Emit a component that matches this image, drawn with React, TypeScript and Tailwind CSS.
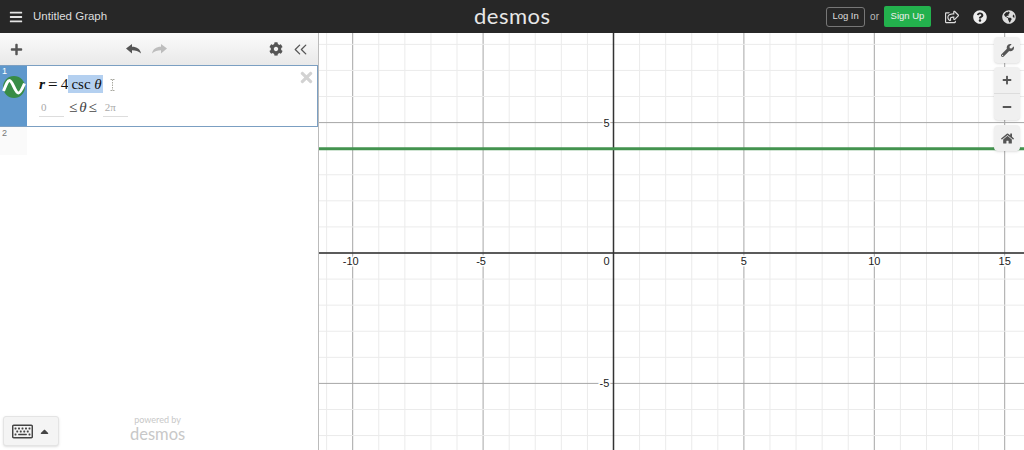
import { FaBars, FaCog, FaGlobeAmericas, FaHome, FaPlus, FaMinus, FaQuestionCircle, FaRegShareSquare, FaTimes, FaWrench, FaCaretUp, FaRegKeyboard } from "react-icons/fa";
import { ChevronsLeft } from "lucide-react";

const UNIT = 26.08;
const W = 705;
const H = 417;
// origin inside the graph svg (page coords minus panel and header)
const OX = 294.5;
const OY = 220;

function range(from: number, to: number) {
  const out: number[] = [];
  for (let i = from; i <= to; i++) out.push(i);
  return out;
}

function Graph() {
  const xs = range(-12, 16);
  const ys = range(-8, 9);
  return (
    <svg width={W} height={H} className="block" style={{ fontFamily: "'Liberation Sans', Arial, sans-serif" }}>
      {xs.map((i) => (
        <line key={i} x1={OX + i * UNIT} x2={OX + i * UNIT} y1={0} y2={H} stroke={i % 5 === 0 ? "#a6a6a6" : "#ebebeb"} strokeWidth={1} />
      ))}
      {ys.map((i) => (
        <line key={i} y1={OY + i * UNIT} y2={OY + i * UNIT} x1={0} x2={W} stroke={i % 5 === 0 ? "#a6a6a6" : "#ebebeb"} strokeWidth={1} />
      ))}
      <line x1={OX} x2={OX} y1={0} y2={H} stroke="#333" strokeWidth={1.5} />
      <line x1={0} x2={W} y1={OY} y2={OY} stroke="#333" strokeWidth={1.5} />
      <line x1={0} x2={W} y1={OY - 4 * UNIT} y2={OY - 4 * UNIT} stroke="#43934f" strokeWidth={3} />
      {[-10, -5, 5, 10, 15].map((n) => (
        <text key={n} x={OX + n * UNIT - (n < 0 ? 2 : 0)} y={OY + 12} textAnchor="middle" fontSize={11} fill="#222" stroke="#fff" strokeWidth={3} paintOrder="stroke">
          {n}
        </text>
      ))}
      <text x={OX - 7} y={OY + 12} textAnchor="middle" fontSize={11} fill="#222">0</text>
      <text x={OX - 7} y={OY - 5 * UNIT + 4} textAnchor="middle" fontSize={11} fill="#222" stroke="#fff" strokeWidth={3} paintOrder="stroke">5</text>
      <text x={OX - 9} y={OY + 5 * UNIT + 4} textAnchor="middle" fontSize={11} fill="#222" stroke="#fff" strokeWidth={3} paintOrder="stroke">-5</text>
    </svg>
  );
}

function WaveIcon() {
  return (
    <svg width="24" height="24" viewBox="0 0 24 24">
      <circle cx="12" cy="12" r="11" fill="#388c46" />
      <path d="M1.5 16 C4 10 5.5 5.5 7.5 5.5 C10.5 5.5 13 18 16.5 18 C18.5 18 20.5 13 22.5 8.5" fill="none" stroke="#fff" strokeWidth="3" />
    </svg>
  );
}

function ReplyArrow({ className }: { className: string }) {
  return (
    <svg width="15" height="10" viewBox="0 0 15 10" className={className}>
      <path d="M0 4.5 L6 0 V2.8 C11 2.8 14 5 15 9.5 C12.5 7 9.5 6.2 6 6.2 V9.5 Z" fill="currentColor" />
    </svg>
  );
}

function IBeam() {
  return (
    <svg width="5" height="12" viewBox="0 0 5 12" className="ml-[7px] mt-[1px]">
      <path d="M0.5 0.5 H4.5 M2.5 0.5 V11.5 M0.5 11.5 H4.5" stroke="#a9a9a0" strokeWidth="1" strokeDasharray="1.5 1" fill="none" />
    </svg>
  );
}

function ExpressionRow() {
  return (
    <div className="flex h-[62px] border-y border-r border-[#7b9fc2] bg-white">
      <div className="relative flex w-[27px] shrink-0 justify-center bg-[#5f98cc] pt-[9px]">
        <span className="absolute left-[2px] top-[1px] text-[9px] leading-none text-white">1</span>
        <WaveIcon />
      </div>
      <div className="relative flex-1 pl-[12px]" style={{ fontFamily: "'Liberation Serif', 'Times New Roman', serif" }}>
        <div className="mt-[7px] flex h-[22px] items-center text-[15.5px] leading-none text-[#111]">
          <i className="font-bold">r</i>
          <span className="ml-[3px] mr-[2px] text-[17px]">=</span>
          <span className="ml-[1px]">4</span>
          <span className="flex h-[18px] items-center bg-[#b4d0f0] pl-[3px] pr-[1px] text-[15px]">
            csc&nbsp;<i>θ</i>
          </span>
          <IBeam />
        </div>
        <div className="mt-[2px] flex items-center text-[15px] leading-none text-[#444]">
          <span className="h-[20px] w-[25px] border-b border-[#ddd] pl-[2px] pt-[5px] text-[11px] text-[#aaa]">0</span>
          <span className="ml-[5px]">≤</span>
          <i className="mx-[2px]">θ</i>
          <span>≤</span>
          <span className="ml-[6px] h-[20px] w-[25px] border-b border-[#ddd] pl-[2px] pt-[5px] text-[11px] text-[#aaa]">2π</span>
        </div>
        <FaTimes className="absolute right-[2px] top-[3px] text-[17px] text-[#d2d2d2]" />
      </div>
    </div>
  );
}

function Panel() {
  return (
    <div className="relative flex w-[319px] shrink-0 flex-col border-r border-[#bbb] bg-white">
      <div className="flex h-[32px] shrink-0 items-center bg-gradient-to-b from-[#fbfbfb] to-[#e9e9e9] pl-[10px] pr-[7px] text-[#555]">
        <FaPlus className="text-[13px]" />
        <div className="ml-[103px] flex items-center gap-[11px]">
          <ReplyArrow className="" />
          <ReplyArrow className="-scale-x-100 text-[#bdbdbd]" />
        </div>
        <FaCog className="ml-auto text-[14px]" />
        <ChevronsLeft className="ml-[7px]" size={21} strokeWidth={1.5} />
      </div>
      <ExpressionRow />
      <div className="flex h-[28px]">
        <div className="w-[27px] bg-[#fafafa] pl-[2px] text-[9px] leading-[12px] text-[#777]">2</div>
      </div>
      <div className="mt-auto flex items-end pb-[4px] pl-[3px]">
        <div className="flex h-[30px] w-[56px] items-center justify-center gap-[5px] rounded-[3px] border border-[#e4e4e4] bg-[#f4f4f4] text-[#444] shadow-sm">
          <FaRegKeyboard className="text-[21px]" />
          <FaCaretUp className="text-[13px]" />
        </div>
        <div className="ml-[71px] flex flex-col items-center gap-[2px] pb-[4px] leading-none text-[#c8c8c8]" style={{ fontFamily: "Lato, sans-serif" }}>
          <span className="text-[9px]">powered by</span>
          <span className="text-[16.5px]">desmos</span>
        </div>
      </div>
    </div>
  );
}

function GraphButton({ children }: { children: React.ReactNode }) {
  return <div className="flex h-[26px] w-[26px] items-center justify-center text-[#555]">{children}</div>;
}

export default function App() {
  return (
    <div className="flex h-[450px] w-[1024px] flex-col overflow-hidden bg-white" style={{ fontFamily: "'Liberation Sans', Arial, sans-serif" }}>
      <header className="relative flex h-[33px] shrink-0 items-center bg-[#272727] pl-[9px] pr-[8px] text-white">
        <FaBars className="text-[14px] text-[#e4e4e4]" />
        <span className="ml-[10px] text-[11.5px] text-[#ddd]">Untitled Graph</span>
        <span className="absolute left-[474px] top-[1px] text-[22px] leading-[30px] tracking-[0.5px] text-[#e8e8e8]" style={{ fontFamily: "Lato, sans-serif" }}>
          desmos
        </span>
        <div className="ml-auto flex items-center">
          <span className="flex h-[20px] w-[39px] items-center justify-center rounded-[3px] border border-[#777] text-[9.5px] text-[#ddd]">Log In</span>
          <span className="ml-[5px] text-[10px] text-[#bbb]">or</span>
          <span className="ml-[5px] flex h-[21px] w-[47px] items-center justify-center rounded-[2px] bg-[#23b14d] text-[9.5px] text-[#eee]">Sign Up</span>
          <FaRegShareSquare className="ml-[14px] text-[14px] text-[#ddd]" />
          <FaQuestionCircle className="ml-[14px] text-[14px] text-[#eee]" />
          <FaGlobeAmericas className="ml-[15px] text-[14px] text-[#ddd]" />
        </div>
      </header>
      <div className="flex min-h-0 flex-1">
        <Panel />
        <div className="relative flex-1 overflow-hidden">
          <Graph />
          <div className="absolute right-[4px] top-[4px] flex flex-col items-center">
            <div className="rounded-[4px] bg-[#f0f0f0] shadow-sm">
              <GraphButton><FaWrench className="text-[13px]" /></GraphButton>
            </div>
            <div className="mt-[4px] flex flex-col rounded-[4px] bg-[#f0f0f0] shadow-sm">
              <GraphButton><FaPlus className="text-[10px]" /></GraphButton>
              <div className="h-px bg-[#ddd]" />
              <GraphButton><FaMinus className="text-[10px]" /></GraphButton>
            </div>
            <div className="mt-[5px] rounded-[4px] bg-[#f0f0f0] shadow-sm">
              <GraphButton><FaHome className="text-[13px]" /></GraphButton>
            </div>
          </div>
        </div>
      </div>
    </div>
  );
}
